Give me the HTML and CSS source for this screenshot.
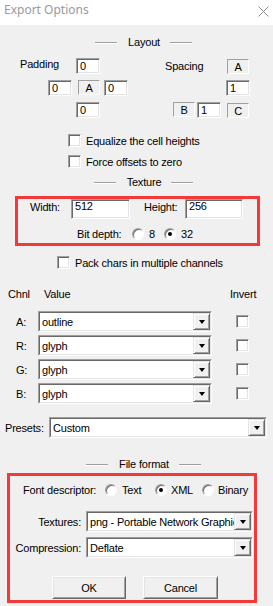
FILE: index.html
```html
<!DOCTYPE html>
<html>
<head>
<meta charset="utf-8">
<title>Export Options</title>
<link rel="stylesheet" href="styles.css">
</head>
<body>
<div class="window">
  <div class="titlebar">
    <span class="title">Export Options</span>
    <svg class="close" width="11" height="11" viewBox="0 0 11 11"><path d="M0.5 0.5L10.5 10.5M10.5 0.5L0.5 10.5" stroke="#8c8c8c" stroke-width="1" fill="none"/></svg>
  </div>
  <div class="content">
    <div class="group-title"><span class="rule rule-l"></span><span>Layout</span><span class="rule rule-r"></span></div>

    <div class="layout">
      <div class="pad-grid">
        <span class="grid-label pad-label">Padding</span>
        <span class="edit small r1 c3">0</span>
        <span class="edit small r2 c2">0</span>
        <span class="tag r2 c3 pad-tag">A</span>
        <span class="edit small r2 c4">0</span>
        <span class="edit small r3 c3">0</span>
      </div>
      <div class="spc-grid">
        <span class="grid-label spc-label">Spacing</span>
        <span class="tag r1 c3 spc-tag">A</span>
        <span class="edit small r2 c3 spc-edit3">1</span>
        <span class="tag r3 c1 spc-tagb">B</span>
        <span class="edit small r3 c2 spc-edit2">1</span>
        <span class="tag r3 c3 spc-tag">C</span>
      </div>
    </div>

    <div class="check-row eq"><span class="checkbox"></span><span>Equalize the cell heights</span></div>
    <div class="check-row force"><span class="checkbox"></span><span>Force offsets to zero</span></div>

    <div class="group-title gt-texture"><span class="rule rule-l"></span><span>Texture</span><span class="rule rule-r"></span></div>

    <div class="mark mark-tex">
      <div class="tex-row">
        <span class="tex-label w-label">Width:</span>
        <span class="edit big w-edit">512</span>
        <span class="tex-label h-label">Height:</span>
        <span class="edit big h-edit">256</span>
      </div>
      <div class="opt-row depth-row">
        <span class="depth-label">Bit depth:</span>
        <span class="radio"></span><span class="opt-text o8">8</span>
        <span class="radio on"></span><span class="opt-text">32</span>
      </div>
    </div>

    <div class="check-row pack"><span class="checkbox"></span><span>Pack chars in multiple channels</span></div>

    <div class="chan-head"><span class="ch-col">Chnl</span><span class="val-col">Value</span><span>Invert</span></div>

    <div class="chan-row first"><span class="chan-label">A:</span><div class="combo chan-combo"><div class="combo-in"><span class="val">outline</span><span class="drop"><span class="arrow"></span></span></div></div><span class="checkbox inv"></span></div>
    <div class="chan-row"><span class="chan-label">R:</span><div class="combo chan-combo"><div class="combo-in"><span class="val">glyph</span><span class="drop"><span class="arrow"></span></span></div></div><span class="checkbox inv"></span></div>
    <div class="chan-row"><span class="chan-label">G:</span><div class="combo chan-combo"><div class="combo-in"><span class="val">glyph</span><span class="drop"><span class="arrow"></span></span></div></div><span class="checkbox inv"></span></div>
    <div class="chan-row"><span class="chan-label">B:</span><div class="combo chan-combo"><div class="combo-in"><span class="val">glyph</span><span class="drop"><span class="arrow"></span></span></div></div><span class="checkbox inv"></span></div>

    <div class="presets-row"><span class="presets-label">Presets:</span><div class="combo presets-combo"><div class="combo-in"><span class="val">Custom</span><span class="drop"><span class="arrow"></span></span></div></div></div>

    <div class="group-title gt-file"><span class="rule rule-l"></span><span>File format</span><span class="rule rule-r"></span></div>

    <div class="mark mark-file">
      <div class="opt-row fd-row">
        <span class="fd-label">Font descriptor:</span>
        <span class="radio"></span><span class="opt-text o-text">Text</span>
        <span class="radio on"></span><span class="opt-text o-xml">XML</span>
        <span class="radio"></span><span class="opt-text o-bin">Binary</span>
      </div>
      <div class="form-row tex-format">
        <span class="form-label">Textures:</span>
        <div class="combo form-combo"><div class="combo-in"><span class="val">png - Portable Network Graphics</span><span class="drop"><span class="arrow"></span></span></div></div>
      </div>
      <div class="form-row comp-row">
        <span class="form-label">Compression:</span>
        <div class="combo form-combo"><div class="combo-in"><span class="val">Deflate</span><span class="drop"><span class="arrow"></span></span></div></div>
      </div>
      <div class="btn-row">
        <span class="push ok">OK</span>
        <span class="push cancel">Cancel</span>
      </div>
    </div>
  </div>
</div>
</body>
</html>
```
FILE: styles.css
```css
* { box-sizing: border-box; }
html, body { margin: 0; padding: 0; }
body {
  width: 273px;
  height: 606px;
  overflow: hidden;
  background: #f0f0f0;
  font-family: "Liberation Sans", Arial, sans-serif;
  font-size: 11px;
  letter-spacing: -0.2px;
  color: #000;
}
.window { width: 273px; height: 606px; background: #f0f0f0; }

.titlebar {
  height: 25px;
  background: #fff;
  display: flex;
  justify-content: space-between;
  align-items: flex-start;
}
.title {
  font-family: "Noto Sans", "Open Sans", sans-serif;
  font-size: 12px;
  line-height: 16px;
  letter-spacing: 0;
  color: #999;
  margin: 2px 0 0 4px;
}
.close { margin: 6px 4px 0 0; }

.content { display: flex; flex-direction: column; align-items: flex-start; }

.group-title {
  align-self: stretch;
  display: flex;
  justify-content: center;
  align-items: center;
  height: 13px;
  line-height: 13px;
  padding-left: 14px;
  margin-top: 11px;
  white-space: nowrap;
}
.rule { width: 22px; height: 2px; border-top: 1px solid #a0a0a0; border-bottom: 1px solid #fff; }
.rule-l { margin-right: 11px; }
.rule-r { margin-left: 10px; }
.gt-texture { margin-top: 8px; }
.gt-file { margin-top: 20px; }

/* sunken controls */
.edit {
  display: block;
  background: #fff;
  border: 1px solid;
  border-color: #a0a0a0 #fff #fff #a0a0a0;
  box-shadow: inset 1px 1px 0 #696969, inset -1px -1px 0 #e3e3e3;
  line-height: 13px;
  white-space: nowrap;
}
.edit.small { width: 24px; height: 16px; padding: 1px 0 0 3px; }
.edit.big { height: 20px; padding: 0 0 0 3px; }

.checkbox {
  display: block;
  flex: none;
  width: 13px;
  height: 13px;
  background: #fff;
  border: 1px solid;
  border-color: #a0a0a0 #fff #fff #a0a0a0;
  box-shadow: inset 1px 1px 0 #696969, inset -1px -1px 0 #e3e3e3;
}

.radio {
  flex: none;
  width: 12px;
  height: 12px;
  border-radius: 50%;
  background: #fff;
  border: 1px solid;
  border-color: #a0a0a0 #fff #fff #a0a0a0;
  box-shadow: inset 1px 1px 0 #696969;
  display: flex;
  align-items: center;
  justify-content: center;
}
.radio.on::after {
  content: "";
  width: 4px;
  height: 4px;
  border-radius: 50%;
  background: #000;
}

.tag {
  display: flex;
  align-items: center;
  justify-content: center;
  width: 22px;
  height: 15px;
  border: 1px solid;
  border-color: #a0a0a0 #fff #fff #a0a0a0;
}

/* layout grids */
.layout { display: flex; margin-top: 9px; }
.pad-grid {
  display: grid;
  margin-left: 20px;
  grid-template-columns: 24px 24px 24px 24px;
  grid-template-rows: 16px 16px 16px;
  column-gap: 4px;
  row-gap: 6px;
}
.spc-grid {
  display: grid;
  margin-left: 37px;
  grid-template-columns: 31px 26px 29px;
  grid-template-rows: 16px 16px 16px;
  row-gap: 6px;
}
.r1 { grid-row: 1; }
.r2 { grid-row: 2; }
.r3 { grid-row: 3; }
.c1 { grid-column: 1; }
.c2 { grid-column: 2; }
.c3 { grid-column: 3; }
.c4 { grid-column: 4; }
.grid-label { grid-row: 1; grid-column: 1 / 3; line-height: 13px; white-space: nowrap; }
.pad-label { margin-top: 0; }
.spc-label { margin-top: 2px; }
.pad-tag { margin-left: 2px; }
.spc-tag { margin: 1px 0 0 5px; }
.spc-tagb { justify-self: end; margin-right: 1px; }
.spc-edit2 { margin-left: 1px; }
.spc-edit3 { margin-left: 4px; }

.check-row { display: flex; align-items: center; height: 13px; gap: 5px; white-space: nowrap; }
.eq { margin: 16px 0 0 68px; }
.force { margin: 8px 0 0 68px; }
.pack { margin: 10px 0 0 57px; }

/* red annotation boxes */
.mark { border: 3px solid #f23a3a; }
.mark-tex { margin: 7px 0 0 15px; width: 245px; height: 50px; }
.mark-file { margin: 2px 0 0 7px; width: 250px; height: 130px; }

.tex-row { display: flex; height: 20px; }
.tex-label { line-height: 13px; margin-top: 2px; white-space: nowrap; }
.w-label { width: 53px; padding-left: 12px; }
.w-edit { width: 59px; }
.h-label { width: 41px; margin-left: 14px; }
.h-edit { width: 58px; }

.opt-row { display: flex; align-items: center; height: 16px; white-space: nowrap; }
.depth-row { margin: 7px 0 0 59px; }
.depth-label { width: 55px; }
.opt-text { margin-left: 5px; }
.o8 { width: 15px; }

.chan-head { display: flex; height: 13px; line-height: 13px; margin-top: 19px; padding-left: 8px; }
.ch-col { width: 36px; }
.val-col { width: 186px; }

.chan-row { display: flex; align-items: center; height: 21px; margin-top: 3px; }
.chan-row.first { margin-top: 10px; }
.chan-label { width: 38px; padding-left: 16px; }
.chan-combo { width: 174px; }
.inv { margin-left: 24px; }

.combo {
  height: 21px;
  border: 1px solid;
  border-color: #a0a0a0 #fff #fff #a0a0a0;
}
.combo-in {
  display: flex;
  height: 100%;
  background: #fff;
  border: 1px solid;
  border-color: #696969 #e3e3e3 #e3e3e3 #696969;
}
.combo .val {
  flex: 1;
  min-width: 0;
  overflow: hidden;
  white-space: nowrap;
  display: flex;
  align-items: center;
  padding-left: 2px;
}
.drop {
  flex: none;
  width: 17px;
  height: 100%;
  background: #f0f0f0;
  border: 1px solid;
  border-color: #e3e3e3 #696969 #696969 #e3e3e3;
  box-shadow: inset 1px 1px 0 #fff, inset -1px -1px 0 #a0a0a0;
  display: flex;
  align-items: center;
  justify-content: center;
}
.arrow {
  width: 0;
  height: 0;
  border-left: 3.5px solid transparent;
  border-right: 3.5px solid transparent;
  border-top: 4px solid #000;
}

.presets-row { display: flex; align-items: center; height: 21px; margin-top: 13px; }
.presets-label { width: 49px; padding-left: 5px; white-space: nowrap; }
.presets-combo { width: 218px; }

.fd-row { margin-top: 6px; }
.fd-label { width: 95px; padding-left: 13px; }
.o-text { width: 33px; }
.o-xml { width: 31px; margin-left: 4px; }
.o-bin { margin-left: 4px; }

.form-row { display: flex; align-items: center; height: 21px; }
.tex-format { margin-top: 13px; }
.comp-row { margin-top: 5px; }
.form-label { width: 76px; padding-right: 5px; text-align: right; white-space: nowrap; }
.form-combo { width: 167px; }

.btn-row { display: flex; margin-top: 18px; padding-left: 42px; }
.push {
  display: flex;
  align-items: center;
  justify-content: center;
  height: 23px;
  background: #f0f0f0;
  border: 1px solid;
  border-color: #fff #696969 #696969 #fff;
  box-shadow: inset 1px 1px 0 #e3e3e3, inset -1px -1px 0 #a0a0a0;
}
.ok { width: 74px; }
.cancel { width: 75px; margin-left: 17px; }
```
